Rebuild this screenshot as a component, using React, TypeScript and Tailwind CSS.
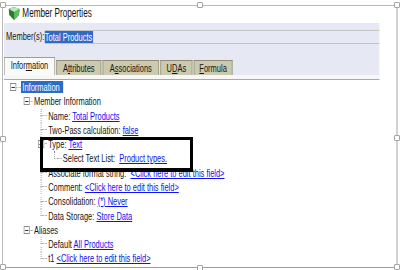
import type { ReactNode } from "react"

const line = "border-dotted border-[#8a8a8a]"

function Expander() {
  return (
    <div className="flex h-[8px] w-[9px] shrink-0 items-center justify-center border border-[#8c8c8c] bg-white">
      <div className="h-px w-[5px] bg-[#333]" />
    </div>
  )
}

function Conn({ last, wide }: { last?: boolean; wide?: boolean }) {
  return (
    <div className={`flex shrink-0 flex-col self-stretch ${wide ? "w-[11px]" : "w-[9px]"}`}>
      <div className={`h-1/2 border-b border-l ${line}`} />
      <div className={last ? "h-1/2" : `h-1/2 border-l ${line}`} />
    </div>
  )
}

function Link({ children }: { children: ReactNode }) {
  return <span className="text-[#1010f0] underline underline-offset-1">{children}</span>
}

function Row({ children }: { children: ReactNode }) {
  return <div className="flex h-[14.3px] items-center">{children}</div>
}

function Leaf({ label, value, last, gap = " " }: { label: string; value: string; last?: boolean; gap?: string }) {
  return (
    <Row>
      <div className="w-[54px] shrink-0" />
      <Conn last={last} />
      <div className="ml-[2px] whitespace-pre">
        {label}
        {gap}
        <Link>{value}</Link>
      </div>
    </Row>
  )
}

function ActiveTab({ label }: { label: ReactNode }) {
  return (
    <div className="flex h-[18px] w-[75px] items-center justify-center border border-b-0 border-[#9c9c9c] bg-[#fafaf8] pb-[2px]">
      {label}
    </div>
  )
}

function InactiveTab({ label, w }: { label: ReactNode; w: string }) {
  return (
    <div className={`flex h-[15px] items-center justify-center border border-b-0 border-[#8e8c74] bg-[#cbc9ae] ${w}`}>
      {label}
    </div>
  )
}

function TitleIcon() {
  return (
    <svg width="18" height="13" viewBox="0 0 18 13" preserveAspectRatio="none">
      <path d="M1 2 L9 0 L17 2 L16 8 L9 13 L2 8 Z" fill="#3f9a3a" />
      <path d="M1 2 L9 0 L9 13 L2 8 Z" fill="#2c7a2c" />
      <path d="M1 2 L9 0 L17 2 L9 5 Z" fill="#b9e6c4" />
      <path d="M9 5 L17 2 L16 8 L9 13 Z" fill="#5cc05a" />
    </svg>
  )
}

export default function App() {
  return (
    <div className="relative h-[270px] w-[400px] overflow-hidden bg-white font-['Liberation_Sans',Arial,sans-serif] text-[#151515]">
      <div className="ml-[2px] mt-[5px] h-[263px] w-[396px] border border-[#b9b9b9] border-r-2 border-r-[#d2d2d2] border-b-[#9c9c9c] pl-px">
        <div className="w-[552px] origin-top-left scale-x-[0.68] text-[11px]">
          {/* title */}
          <div className="flex h-[17px] items-center pb-[3px]">
            <div className="ml-[6px]">
              <TitleIcon />
            </div>
            <span className="ml-[3px] text-[12px] text-[#111]">Member Properties</span>
          </div>

          {/* header band */}
          <div className="flex flex-col bg-[#e6e9f4] pt-[7px]">
            <div className="flex h-[13px] items-center">
              <span className="w-[60px] shrink-0 pl-[3px]">Member(s):</span>
              <div className="flex h-[14px] flex-1 items-center border-y border-[#c4c4c4]">
                <span className="h-[12px] bg-[#316ac5] pr-px leading-[12px] text-white">Total Products</span>
              </div>
            </div>
            <div className="mt-[14px] flex h-[18px] items-end gap-[2px]">
              <ActiveTab
                label={
                  <span>
                    Infor<span className="underline">m</span>ation
                  </span>
                }
              />
              <InactiveTab
                w="w-[66px]"
                label={
                  <span>
                    A<span className="underline">t</span>tributes
                  </span>
                }
              />
              <InactiveTab
                w="w-[83px]"
                label={
                  <span>
                    A<span className="underline">s</span>sociations
                  </span>
                }
              />
              <InactiveTab
                w="w-[47px]"
                label={
                  <span>
                    U<span className="underline">D</span>As
                  </span>
                }
              />
              <InactiveTab
                w="w-[57px]"
                label={
                  <span>
                    <span className="underline">F</span>ormula
                  </span>
                }
              />
            </div>
            <div className="h-[4px] bg-[#f7f7f7]" />
            <div className="h-px bg-[#a8a8a8]" />
          </div>

          {/* tree */}
          <div className="flex flex-col bg-white">
            <Row>
              <div className="w-[9px] shrink-0" />
              <Expander />
              <div className={`w-[7px] border-t ${line}`} />
              <span className="h-[12px] bg-[#316ac5] pl-[2px] pr-[5px] leading-[12px] text-white">Information</span>
            </Row>
            <Row>
              <div className="w-[29px] shrink-0" />
              <Expander />
              <div className={`w-[5px] border-t ${line}`} />
              <span className="ml-px">Member Information</span>
            </Row>
            <Leaf label="Name:" value="Total Products" />
            <Leaf label="Two-Pass calculation:" value="false" />
            <Row>
              <div className="w-[54px] shrink-0" />
              <div className="relative flex w-[9px] shrink-0 flex-col self-stretch">
                <div className={`h-1/2 border-b border-l ${line}`} />
                <div className={`h-1/2 border-l ${line}`} />
                <div className="absolute left-[-4px] top-[3px]">
                  <Expander />
                </div>
              </div>
              <div className="ml-[2px] whitespace-pre">
                Type: <Link>Text</Link>
              </div>
            </Row>
            <Row>
              <div className="w-[54px] shrink-0" />
              <div className={`w-[19.5px] shrink-0 self-stretch border-l ${line}`} />
              <Conn last wide />
              <div className="ml-[2px] whitespace-pre">
                Select Text List:{"  "}
                <Link>Product types.</Link>
              </div>
            </Row>
            <Leaf label="Associate format string:" gap="  " value="<Click here to edit this field>" />
            <Leaf label="Comment:" value="<Click here to edit this field>" />
            <Leaf label="Consolidation:" value="(*) Never" />
            <Leaf label="Data Storage:" value="Store Data" last />
            <Row>
              <div className="w-[29px] shrink-0" />
              <Expander />
              <div className={`w-[5px] border-t ${line}`} />
              <span className="ml-px">Aliases</span>
            </Row>
            <Leaf label="Default" value="All Products" />
            <Leaf label="t1" value="<Click here to edit this field>" last />
          </div>
        </div>
      </div>

      {/* annotation box */}
      <div className="absolute left-[40px] top-[137px] h-[35px] w-[153px] border-[3px] border-b-4 border-black" />

      {/* resize handles */}
      <div className="absolute left-0 top-[2px] h-[6px] w-[6px] rounded-[1px] border border-[#a4a4a4] bg-white" />
      <div className="absolute left-[197px] top-[2px] h-[6px] w-[6px] rounded-[1px] border border-[#a4a4a4] bg-white" />
      <div className="absolute left-[394px] top-[2px] h-[6px] w-[6px] rounded-[1px] border border-[#a4a4a4] bg-white" />
      <div className="absolute left-0 top-[136px] h-[6px] w-[6px] rounded-[1px] border border-[#a4a4a4] bg-white" />
      <div className="absolute left-[394px] top-[135px] h-[6px] w-[6px] rounded-[1px] border border-[#a4a4a4] bg-white" />
      <div className="absolute left-0 top-[264px] h-[6px] w-[6px] rounded-[1px] border border-[#a4a4a4] bg-white" />
      <div className="absolute left-[197px] top-[265px] h-[6px] w-[6px] rounded-[1px] border border-[#a4a4a4] bg-white" />
      <div className="absolute left-[394px] top-[264px] h-[6px] w-[6px] rounded-[1px] border border-[#a4a4a4] bg-white" />
    </div>
  )
}
